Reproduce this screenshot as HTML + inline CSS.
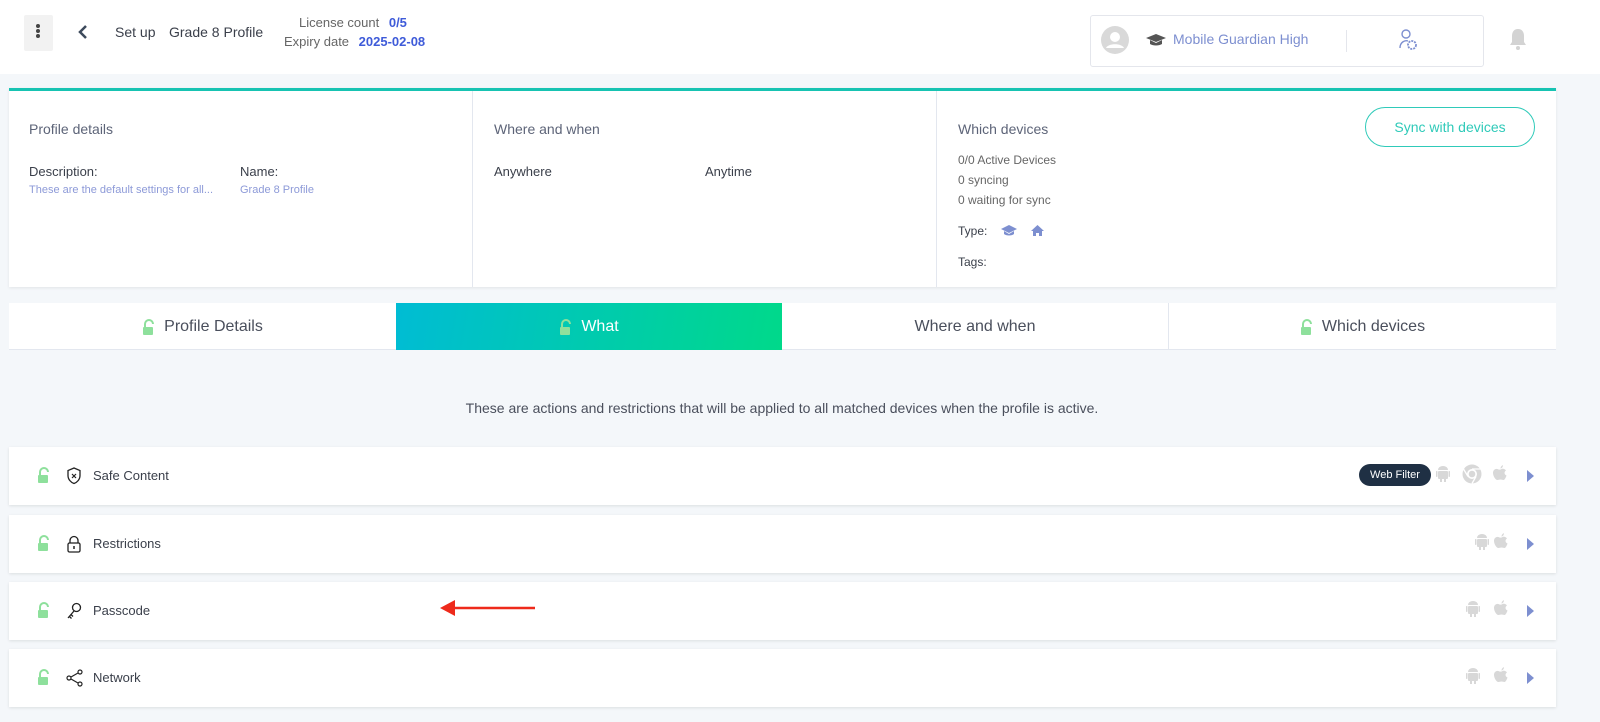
<!DOCTYPE html>
<html><head><meta charset="utf-8"><style>
*{box-sizing:border-box;margin:0;padding:0}
body{width:1600px;height:722px;overflow:hidden;background:#f4f7fa;font-family:"Liberation Sans",sans-serif;color:#3a3f4a;position:relative}
.abs{position:absolute}
.hdr{left:0;top:0;width:1600px;height:74px;background:#fff}
.card{left:9px;top:88px;width:1547px;height:199px;background:#fff;border-top:3px solid #17c3b2;box-shadow:0 1px 3px rgba(0,0,0,.08)}
.col{position:absolute;top:0;height:196px;border-right:1px solid #e3e7ef}
.t{font-size:14px;color:#5d6478}
.s{font-size:13px;color:#3a3f4a}
.tabs{left:9px;top:303px;width:1547px;height:47px;background:#fff;border-bottom:1px solid #e3e7ef}
.tab{position:absolute;top:0;height:47px;display:flex;align-items:center;justify-content:center;font-size:16px;color:#4a4f5c;gap:10px}
.row{left:9px;width:1547px;height:58px;background:#fff;box-shadow:0 1px 3px rgba(0,0,0,.1)}
.row .lbl{position:absolute;left:84px;top:0;line-height:58px;font-size:13px;color:#3a3f4a}
.lk{position:absolute;left:28px;top:20px}
.ic{position:absolute;left:57px;top:20px}
.arr{position:absolute;right:22px;top:23px;width:0;height:0;border-top:6px solid transparent;border-bottom:6px solid transparent;border-left:7px solid #7d8fd0}
.gi{position:absolute;top:20px}
</style></head><body>
<div class="abs hdr"></div>
<div class="abs" style="left:24px;top:15px;width:29px;height:36px;background:#f2f2f2;border-radius:2px"></div>
<div class="abs" style="left:36px;top:24px;width:4px;height:4px;background:#444;border-radius:2px;box-shadow:0 5px 0 #444,0 10px 0 #444"></div>
<svg class="abs" style="left:78px;top:25px" width="10" height="14"><path d="M8 1L2 7l6 6" stroke="#3d4a5c" stroke-width="2.5" fill="none"/></svg>
<div class="abs" style="left:115px;top:24px;font-size:14px;color:#3a3f4a">Set up</div>
<div class="abs" style="left:169px;top:24px;font-size:14px;color:#3a3f4a">Grade 8 Profile</div>
<div class="abs" style="left:299px;top:15px;font-size:13px;color:#666">License count <b style="color:#3e5bd9;margin-left:6px">0/5</b></div>
<div class="abs" style="left:284px;top:34px;font-size:13px;color:#666">Expiry date <b style="color:#3e5bd9;margin-left:6px">2025-02-08</b></div>
<div class="abs" style="left:1090px;top:15px;width:394px;height:52px;background:#fff;border:1px solid #e4e6ec;border-radius:3px"></div>
<svg class="abs" style="left:1101px;top:26px" width="28" height="28"><circle cx="14" cy="14" r="14" fill="#d9d9d9"/><circle cx="14" cy="11" r="5" fill="#fff"/><path d="M5 22c2-5 16-5 18 0" fill="#fff"/></svg>
<svg class="abs" style="left:1146px;top:33px" width="20" height="14"><path d="M0 5L10 1l10 4-10 4z" fill="#555"/><path d="M4 7v4c3 2 9 2 12 0V7l-6 3z" fill="#555"/></svg>
<div class="abs" style="left:1173px;top:31px;font-size:14px;color:#7d8fd0">Mobile Guardian High</div>
<div class="abs" style="left:1346px;top:30px;width:1px;height:22px;background:#e4e6ec"></div>
<svg class="abs" style="left:1398px;top:28px" width="22" height="24"><circle cx="8" cy="6" r="4" stroke="#7d8fd0" fill="none" stroke-width="1.4"/><path d="M2 20c0-6 5-8 8-7" stroke="#7d8fd0" fill="none" stroke-width="1.4"/><circle cx="14" cy="17" r="4" stroke="#7d8fd0" fill="none" stroke-width="1.8" stroke-dasharray="2 1"/></svg>
<svg class="abs" style="left:1508px;top:27px" width="20" height="24"><path d="M10 2c-4 0-6 3-6 7v6l-2 3h16l-2-3V9c0-4-2-7-6-7z" fill="#d3d3d3"/><circle cx="10" cy="21" r="2" fill="#d3d3d3"/></svg>

<div class="abs card">
 <div class="col" style="left:0;width:464px">
  <div class="abs t" style="left:20px;top:30px">Profile details</div>
  <div class="abs s" style="left:20px;top:73px">Description:</div>
  <div class="abs s" style="left:231px;top:73px">Name:</div>
  <div class="abs" style="left:20px;top:93px;font-size:11px;color:#8d9ad8">These are the default settings for all...</div>
  <div class="abs" style="left:231px;top:93px;font-size:11px;color:#8d9ad8">Grade 8 Profile</div>
 </div>
 <div class="col" style="left:464px;width:464px">
  <div class="abs t" style="left:21px;top:30px">Where and when</div>
  <div class="abs s" style="left:21px;top:73px">Anywhere</div>
  <div class="abs s" style="left:232px;top:73px">Anytime</div>
 </div>
 <div class="col" style="left:928px;width:619px;border:0">
  <div class="abs t" style="left:21px;top:30px">Which devices</div>
  <div class="abs" style="left:21px;top:62px;font-size:12px;color:#666">0/0 Active Devices</div>
  <div class="abs" style="left:21px;top:82px;font-size:12px;color:#666">0 syncing</div>
  <div class="abs" style="left:21px;top:102px;font-size:12px;color:#666">0 waiting for sync</div>
  <div class="abs s" style="left:21px;top:133px;font-size:12px">Type:</div>
  <svg class="abs" style="left:64px;top:134px" width="16" height="12"><path d="M0 4L8 0l8 4-8 4z" fill="#7d8fd0"/><path d="M3 6v3c2 2 8 2 10 0V6l-5 3z" fill="#7d8fd0"/></svg>
  <svg class="abs" style="left:94px;top:134px" width="13" height="11"><path d="M6.5 0L0 6h2v5h3V8h3v3h3V6h2z" fill="#7d8fd0"/></svg>
  <div class="abs s" style="left:21px;top:164px;font-size:12px">Tags:</div>
  <div class="abs" style="left:428px;top:16px;width:170px;height:40px;border:1px solid #2fcab9;border-radius:20px;text-align:center;line-height:38px;font-size:14px;color:#2fcab9">Sync with devices</div>
 </div>
</div>

<svg width="0" height="0" style="position:absolute"><defs><g id="lk"><path d="M3 8V5a4 4 0 0 1 8 0" stroke="#8ee09c" stroke-width="2" fill="none"/><rect x="1" y="8" width="10" height="8" rx="1" fill="#8ee09c"/></g></defs></svg>
<div class="abs tabs">
 <div class="tab" style="left:0;width:387px"><svg width="12" height="16"><use href="#lk"/></svg>Profile Details</div>
 <div class="tab" style="left:387px;width:386px;background:linear-gradient(100deg,#00bcd4,#00d98a);color:#fff"><svg width="12" height="16"><use href="#lk"/></svg>What</div>
 <div class="tab" style="left:773px;width:387px;border-right:1px solid #e3e7ef">Where and when</div>
 <div class="tab" style="left:1160px;width:387px"><svg width="12" height="16"><use href="#lk"/></svg>Which devices</div>
</div>
<div class="abs" style="left:0;width:1564px;top:400px;text-align:center;font-size:14px;color:#4a4f5c">These are actions and restrictions that will be applied to all matched devices when the profile is active.</div>

<svg width="0" height="0" style="position:absolute"><defs>
<g id="and"><rect x="2" y="5" width="10" height="8" rx="1" fill="#d8d8d8"/><path d="M2 4a5 4 0 0 1 10 0z" fill="#d8d8d8"/><rect x="0" y="5" width="1.5" height="6" rx=".7" fill="#d8d8d8"/><rect x="12.5" y="5" width="1.5" height="6" rx=".7" fill="#d8d8d8"/><rect x="4" y="12" width="2" height="4" fill="#d8d8d8"/><rect x="8" y="12" width="2" height="4" fill="#d8d8d8"/></g>
<g id="app"><path d="M7.5 4.5c1-.5 2-1 3.5-.5 1 .3 1.6 1 2 1.5-2 1-2 4 .5 5-.5 2-2 4.5-3 4.5s-1.5-.5-3-.5-2 .5-3 .5C2.5 15 0 11 0 8 0 4.5 3 3.3 5 4.2c1 .4 1.8.6 2.5.3z" fill="#d8d8d8"/><path d="M7.5 3.5c0-1.5 1-3 2.5-3.3 0 1.5-1 3-2.5 3.3z" fill="#d8d8d8"/></g>
</defs></svg>

<div class="abs row" style="top:447px"><svg class="lk" width="12" height="16"><use href="#lk"/></svg>
<svg class="ic" width="16" height="18"><path d="M8 1L2 3.5v5c0 4 3 7 6 8 3-1 6-4 6-8v-5z" stroke="#222" stroke-width="1.3" fill="none"/><path d="M6 7l4 4M10 7l-4 4" stroke="#222" stroke-width="1.2"/></svg>
<div class="lbl">Safe Content</div>
<div class="abs" style="left:1350px;top:17px;width:72px;height:22px;border-radius:11px;background:#1f3044;color:#fff;font-size:11px;text-align:center;line-height:22px">Web Filter</div>
<svg class="gi" style="left:1427px;top:19px" width="14" height="17"><use href="#and"/></svg>
<svg class="gi" style="left:1453px;top:17px" width="20" height="20"><circle cx="10" cy="10" r="9.5" fill="#d8d8d8"/><circle cx="10" cy="10" r="5" fill="#fff"/><circle cx="10" cy="10" r="3.3" fill="#d8d8d8"/><path d="M10 5h9M6 12.5L1.5 5M14 12.5L10 19.5" stroke="#fff" stroke-width="1.3"/></svg>
<svg class="gi" style="left:1484px;top:18px" width="15" height="16"><use href="#app"/></svg>
<div class="arr"></div></div>

<div class="abs row" style="top:515px"><svg class="lk" width="12" height="16"><use href="#lk"/></svg>
<svg class="ic" width="16" height="18"><path d="M4 8V5.5a4 4 0 0 1 8 0V8" stroke="#222" stroke-width="1.3" fill="none"/><rect x="2" y="8" width="12" height="9" rx="1.5" stroke="#222" stroke-width="1.3" fill="none"/><path d="M8 11v3" stroke="#222" stroke-width="1.5"/></svg>
<div class="lbl">Restrictions</div>
<svg class="gi" style="left:1466px;top:19px" width="14" height="17"><use href="#and"/></svg>
<svg class="gi" style="left:1485px;top:18px" width="15" height="16"><use href="#app"/></svg>
<div class="arr"></div></div>

<div class="abs row" style="top:582px"><svg class="lk" width="12" height="16"><use href="#lk"/></svg>
<svg class="ic" width="16" height="18"><circle cx="10.5" cy="5.5" r="4" stroke="#222" stroke-width="1.3" fill="none"/><path d="M8 9L2 16M3.5 14.5l2 2M5 12.5l2 2" stroke="#222" stroke-width="1.3"/></svg>
<div class="lbl">Passcode</div>
<svg class="gi" style="left:1457px;top:19px" width="14" height="17"><use href="#and"/></svg>
<svg class="gi" style="left:1485px;top:18px" width="15" height="16"><use href="#app"/></svg>
<div class="arr"></div></div>

<div class="abs row" style="top:649px"><svg class="lk" width="12" height="16"><use href="#lk"/></svg>
<svg class="ic" width="18" height="18"><circle cx="3" cy="9" r="2" stroke="#222" stroke-width="1.2" fill="none"/><circle cx="14" cy="3" r="2" stroke="#222" stroke-width="1.2" fill="none"/><circle cx="14" cy="15" r="2" stroke="#222" stroke-width="1.2" fill="none"/><path d="M5 8l7-4M5 10l7 4" stroke="#222" stroke-width="1.2"/></svg>
<div class="lbl">Network</div>
<svg class="gi" style="left:1457px;top:19px" width="14" height="17"><use href="#and"/></svg>
<svg class="gi" style="left:1485px;top:18px" width="15" height="16"><use href="#app"/></svg>
<div class="arr"></div></div>

<svg class="abs" style="left:440px;top:599px" width="96" height="18"><path d="M95 9H12" stroke="#ee2a1b" stroke-width="2.5"/><path d="M0 9l15-8v16z" fill="#ee2a1b"/></svg>
</body></html>
